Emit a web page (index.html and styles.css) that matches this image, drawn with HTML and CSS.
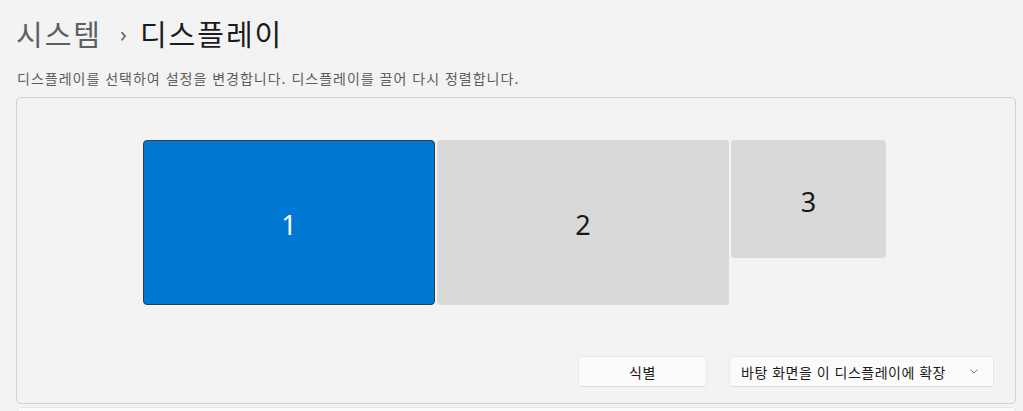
FILE: index.html
```html
<!DOCTYPE html>
<html lang="ko">
<head>
<meta charset="utf-8">
<link rel="stylesheet" href="styles.css">
</head>
<body>
<div class="page">
  <h1 class="title"><span class="crumb">시스템</span><span class="sep">›</span><span class="current">디스플레이</span></h1>
  <p class="desc">디스플레이를 선택하여 설정을 변경합니다. 디스플레이를 끌어 다시 정렬합니다.</p>
  <section class="card">
    <div class="canvas">
      <div class="monitor selected m1"><span>1</span></div>
      <div class="monitor m2"><span>2</span></div>
      <div class="monitor m3"><span>3</span></div>
    </div>
    <div class="actions">
      <button class="btn identify">식별</button>
      <button class="btn select">바탕 화면을 이 디스플레이에 확장<svg class="chev" width="8" height="5" viewBox="0 0 8 5"><path d="M0.5 0.5 L4 4 L7.5 0.5" fill="none" stroke="#7a7a7a" stroke-width="1"/></svg></button>
    </div>
  </section>
  <div class="next-card"></div>
</div>
</body>
</html>
```
FILE: styles.css
```css
* { box-sizing: border-box; }
html, body { margin: 0; padding: 0; }
body {
  background: #f3f3f3;
  font-family: "Noto Sans CJK KR", "Noto Sans", sans-serif;
  width: 1023px;
  height: 411px;
  overflow: hidden;
}
.page { padding: 0 7px 0 16px; }
.title {
  margin: 0;
  padding-top: 9px;
  height: 56px;
  font-size: 29px;
  font-weight: 400;
  letter-spacing: 2px;
  line-height: 44px;
  display: flex;
  align-items: center;
}
.crumb { color: #5f5f5f; }
.sep { color: #5f5f5f; font-size: 22px; margin: 0 13px 0 18px; font-family: "Noto Sans", sans-serif; letter-spacing: 0; }
.current { color: #1b1b1b; }
.desc {
  margin: 0;
  padding: 12px 0 0 1px;
  height: 41px;
  font-size: 14px;
  letter-spacing: 1px;
  line-height: 20px;
  color: #5c5c5c;
}
.card {
  height: 307px;
  border: 1px solid #d2d2d2;
  border-radius: 5px;
  background: #f3f3f3;
  display: flex;
  flex-direction: column;
}
.canvas {
  display: flex;
  gap: 2px;
  align-items: flex-start;
  padding: 42px 0 0 126px;
  height: 258px;
}
.monitor {
  display: flex;
  align-items: center;
  justify-content: center;
  background: #d9d9d9;
  border-radius: 4px;
  font-family: "Noto Sans", sans-serif;
  font-size: 27px;
  color: #1a1a1a;
  padding-top: 4px;
}
.monitor span { line-height: 1; }
.m1 { width: 292px; height: 165px; }
.m2 { width: 292px; height: 165px; }
.m3 { width: 155px; height: 118px; }
.selected {
  background: #0078d4;
  border: 1px solid #3a3a3a;
  color: #ffffff;
}
.actions {
  display: flex;
  justify-content: flex-end;
  gap: 22px;
  padding-right: 21px;
}
.btn {
  height: 31px;
  border: 1px solid #e8e8e8;
  border-bottom-color: #dadada;
  border-radius: 4px;
  background: #fbfbfb;
  font-family: "Noto Sans CJK KR", sans-serif;
  font-size: 14px;
  letter-spacing: 0.5px;
  color: #1b1b1b;
  padding: 0;
  display: flex;
  align-items: center;
}
.identify { width: 129px; justify-content: center; }
.select { width: 265px; padding-left: 11px; justify-content: space-between; padding-right: 15px; }
.chev { display: block; }
.next-card {
  margin-top: 3px;
  margin-left: 1px;
  height: 20px;
  border: 1px solid #e5e5e5;
  border-radius: 4px;
  background: #fbfbfb;
}
```
